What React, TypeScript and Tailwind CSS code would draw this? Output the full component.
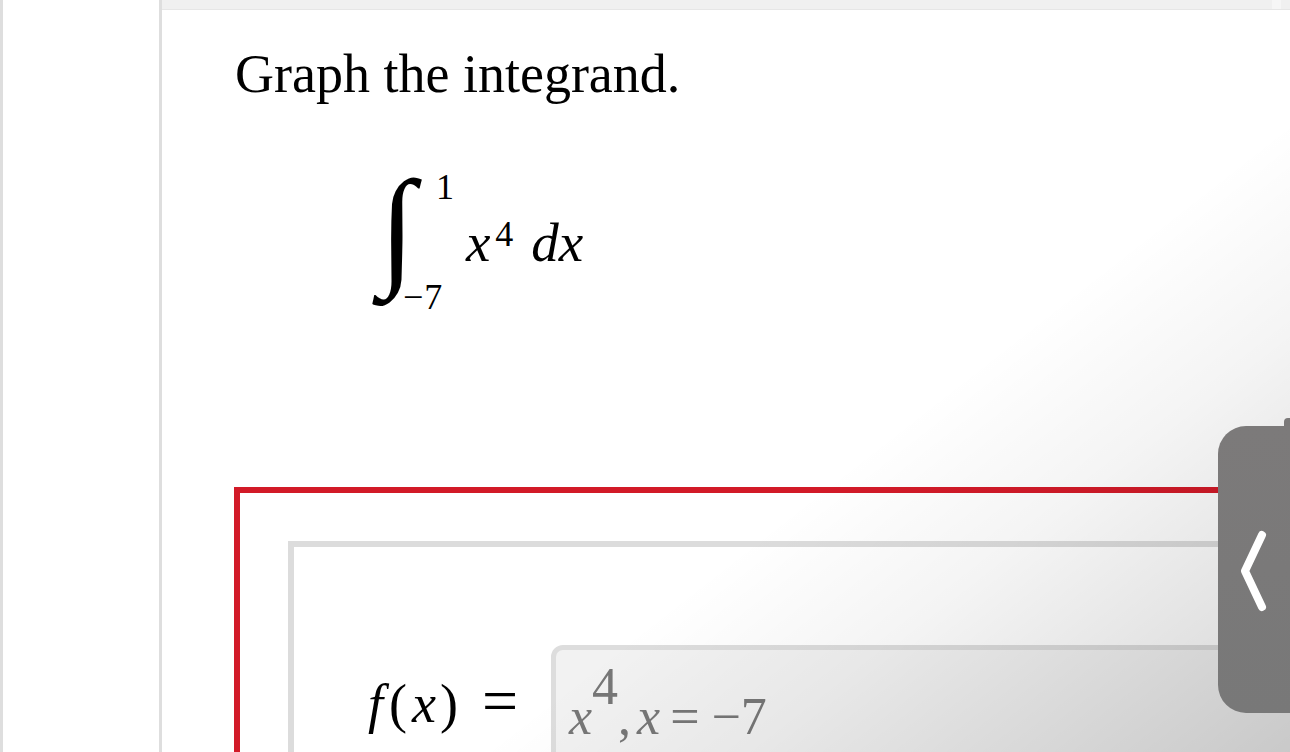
import React from "react";

const serif = "font-['Liberation_Serif','Times_New_Roman',serif]";

function Integral() {
  return (
    <div className={`ml-[144px] mt-[60px] flex items-start text-black ${serif}`}>
      <span className="text-[131px] leading-none">∫</span>
      <div className="-ml-[15px] mt-[8px] flex flex-col gap-[74px] text-[36px] leading-none">
        <span className="pl-[36px]">1</span>
        <span className="pl-[3px] tracking-[1px]">−7</span>
      </div>
      <div className="ml-[12px] mt-[54px] flex items-baseline text-[55px] leading-none">
        <span className="italic">x</span>
        <span className="relative -top-[15px] ml-[5px] text-[36px]">4</span>
        <span className="ml-[18px] italic">dx</span>
      </div>
    </div>
  );
}

function AnswerRow() {
  return (
    <div className="ml-[74px] mt-[98px] flex items-start">
      <div className={`mt-[24px] flex w-[183px] shrink-0 items-baseline text-[54px] leading-none text-black ${serif}`}>
        <span className="italic">f</span>
        <span className="ml-[6px]">(</span>
        <span className="ml-[5px] italic">x</span>
        <span className="ml-[4px]">)</span>
        <span className="ml-[24px] text-[64px]">=</span>
      </div>
      <div className="h-[130px] w-[800px] rounded-[12px] border-[5px] border-[#dddddd] bg-[#f2f2f2] pl-[13px] pt-[41px]">
        <div className={`flex items-baseline text-[52px] leading-none text-[#777777] ${serif}`}>
          <span className="italic">x</span>
          <span className="relative -top-[30px]">4</span>
          <span>,</span>
          <span className="ml-[6px] italic">x</span>
          <span className="ml-[10px]">=</span>
          <span className="ml-[12px]">−7</span>
        </div>
      </div>
    </div>
  );
}

export default function App() {
  return (
    <div className="relative flex h-[752px] w-[1290px] overflow-hidden bg-white">
      <div className="h-full w-[162px] shrink-0 border-l-[3px] border-r-[3px] border-[#dedede]" />
      <div className="flex min-w-0 flex-1 flex-col">
        <div className="flex h-[10px] shrink-0 justify-end border-b border-[#e6e6e6] bg-[#f0f0f0]">
          <div className="mr-[9px] w-[9px] bg-[#f6f6f6]" />
        </div>
        <div className="pl-[73px]">
          <h1 className={`mt-[37px] text-[54px] font-normal leading-none text-black ${serif}`}>
            Graph the integrand.
          </h1>
          <Integral />
          <div className="-ml-px mt-[172px] h-[300px] w-[1100px] border-[6px] border-[#d21a28] pl-[48px] pt-[48px]">
            <div className="h-[300px] w-[1100px] border-[6px] border-[#dcdcdc] bg-white">
              <AnswerRow />
            </div>
          </div>
        </div>
      </div>

      <div className="pointer-events-none absolute inset-0 bg-[linear-gradient(142deg,transparent_64%,rgba(0,0,0,0.045)_76%,rgba(0,0,0,0.17)_100%)]" />

      <div className="absolute right-0 top-[418px] h-[16px] w-[6px] rounded-tl-[4px] bg-[#7b7979]" />
      <div className="absolute right-0 top-[426px] flex h-[287px] w-[72px] items-center justify-center rounded-l-[28px] bg-[linear-gradient(180deg,#7c7a7a,#787878)]">
        <svg width="30" height="84" viewBox="0 0 30 84" fill="none">
          <path d="M23 7 L6 43 L23 79" stroke="white" strokeWidth="8" strokeLinecap="round" strokeLinejoin="round" />
        </svg>
      </div>
    </div>
  );
}
